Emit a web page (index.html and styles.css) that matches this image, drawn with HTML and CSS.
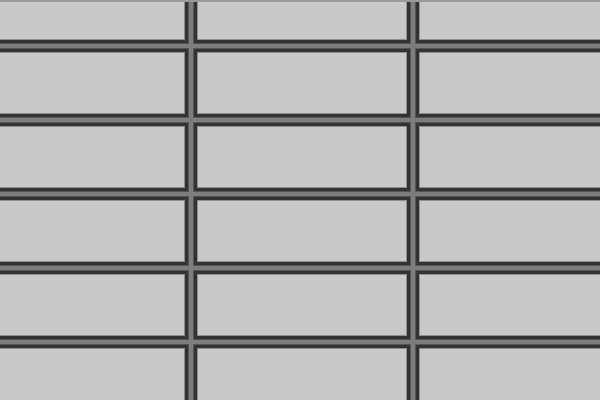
FILE: index.html
```html
<!DOCTYPE html>
<html>
<head>
<meta charset="utf-8">
<link rel="stylesheet" href="styles.css">
</head>
<body>
<div class="frame">
  <div class="grid">
    <div class="cell"></div><div class="cell"></div><div class="cell"></div>
    <div class="cell"></div><div class="cell"></div><div class="cell"></div>
    <div class="cell"></div><div class="cell"></div><div class="cell"></div>
    <div class="cell"></div><div class="cell"></div><div class="cell"></div>
    <div class="cell"></div><div class="cell"></div><div class="cell"></div>
    <div class="cell"></div><div class="cell"></div><div class="cell"></div>
    <div class="cell"></div><div class="cell"></div><div class="cell"></div>
  </div>
</div>
</body>
</html>
```

FILE: styles.css
```css
html, body {
  margin: 0;
  padding: 0;
  width: 600px;
  height: 400px;
  overflow: hidden;
  background: #7d7d7d;
}
.frame {
  width: 600px;
  height: 400px;
  overflow: hidden;
  border-top: 2px solid #9a9a9a;
  box-sizing: border-box;
}
.grid {
  display: grid;
  grid-template-columns: repeat(3, 216px);
  grid-auto-rows: 68px;
  gap: 6px;
  margin-left: -28px;
  margin-top: -27px;
}
.cell {
  background: #c9c9c9;
  border: 3px solid #333333;
  box-shadow: 0 0 0 1px #555555, inset 0 0 0 1px #8e8e8e;
}
```
